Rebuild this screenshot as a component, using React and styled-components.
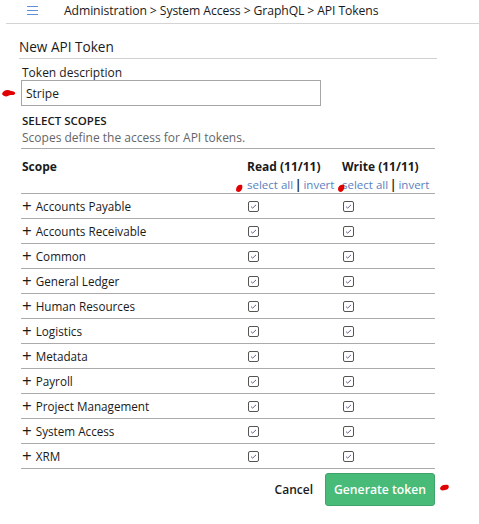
import React from 'react'
import styled, { createGlobalStyle } from 'styled-components'

const GlobalStyle = createGlobalStyle`
  html, body {
    margin: 0;
    padding: 0;
    background: #ffffff;
  }
  body {
    font-family: "Open Sans", "Noto Sans", sans-serif;
    color: #1a1a1a;
  }
`;

const Page = styled.div`
  position: relative;
  width: 479px;
  height: 524px;
  overflow: hidden;
`;

const TopBar = styled.div`
  display: flex;
  align-items: center;
  height: 23px;
  margin-left: 6px;
  border-bottom: 1px solid #d4d4d4;
`;

const Burger = styled.div`
  display: flex;
  flex-direction: column;
  gap: 3px;
  width: 11px;
  margin-left: 21px;
  margin-right: 26px;
  margin-top: -3px;

  span {
    display: block;
    height: 1px;
    background: #5f8fd6;
  }
`;

const Crumbs = styled.div`
  font-size: 12.2px;
  color: #1a1a1a;
  margin-top: -3px;
  letter-spacing: -0.1px;
`;

const Content = styled.div`
  width: 418px;
  margin-left: 19px;
  padding-top: 13px;
`;

const Title = styled.h2`
  margin: 0;
  font-size: 13.6px;
  font-weight: 400;
  line-height: 20px;
  padding-bottom: 1px;
  border-bottom: 1px solid #d0d0d0;
  color: #1a1a1a;
`;

const Form = styled.div`
  padding-left: 2px;
  width: 414px;
`;

const Label = styled.div`
  font-size: 12px;
  line-height: 16px;
  margin-top: 6px;
  padding-left: 1px;
`;

const Input = styled.input`
  display: block;
  box-sizing: border-box;
  width: 300px;
  height: 26px;
  margin-top: -1px;
  border: 1px solid #a6a6a6;
  padding: 0 4px;
  font-family: inherit;
  font-size: 12px;
  color: #1a1a1a;
  outline: none;
`;

const SectionHead = styled.div`
  font-size: 11.5px;
  font-weight: 600;
  margin-top: 7px;
  line-height: 16px;
  padding-left: 1px;
`;

const SectionSub = styled.div`
  font-size: 12px;
  color: #666666;
  line-height: 17px;
  padding-left: 1px;
  padding-bottom: 2px;
  border-bottom: 1px solid #aaaaaa;
`;

const Table = styled.div`
  display: grid;
  grid-template-columns: 226px 95px 93px;
`;

const HeadCell = styled.div`
  display: flex;
  flex-direction: column;
  justify-content: flex-start;
  height: 44px;
  padding-left: ${({ $first }) => ($first ? '1px' : '0')};
  border-bottom: 1px solid #aaaaaa;
`;

const HeadTitle = styled.div`
  font-size: 12px;
  font-weight: 700;
  line-height: 16px;
  margin-top: 10px;
`;

const Links = styled.div`
  font-size: 11.5px;
  line-height: 16px;
  margin-top: 2px;
  color: #5a7fc0;
  white-space: nowrap;

  b {
    color: #1a1a1a;
    font-weight: 700;
    margin: 0 2px;
  }
`;

const Cell = styled.div`
  display: flex;
  align-items: center;
  height: 24px;
  border-bottom: 1px solid #aaaaaa;
  font-size: 11.7px;
  padding-left: 1px;
`;

const Plus = styled.span`
  font-size: 17px;
  font-weight: 400;
  line-height: 1;
  margin-right: 4px;
  margin-top: -2px;
`;

const Box = styled.svg`
  width: 11px;
  height: 11px;
  display: block;
`;

const Actions = styled.div`
  display: flex;
  justify-content: flex-end;
  align-items: center;
  gap: 12px;
  margin-top: 4px;
`;

const Cancel = styled.button`
  background: none;
  border: none;
  padding: 0;
  font-family: inherit;
  font-size: 12px;
  font-weight: 600;
  color: #1a1a1a;
  cursor: pointer;
`;

const Primary = styled.button`
  box-sizing: border-box;
  width: 110px;
  height: 33px;
  background: #48bb78;
  border: 1px solid #3fa46a;
  border-radius: 3px;
  color: #ffffff;
  font-family: inherit;
  font-size: 12.2px;
  font-weight: 600;
  cursor: pointer;
`;

const Mark = styled.svg`
  position: absolute;
  left: ${({ $x }) => $x}px;
  top: ${({ $y }) => $y}px;
`;

const scopes = [
  'Accounts Payable',
  'Accounts Receivable',
  'Common',
  'General Ledger',
  'Human Resources',
  'Logistics',
  'Metadata',
  'Payroll',
  'Project Management',
  'System Access',
  'XRM',
];

const CheckBox = () => (
  <Box viewBox="0 0 11 11">
    <rect x="0.5" y="0.5" width="10" height="10" rx="1.5" fill="#fff" stroke="#555" />
    <path d="M3 5.6 L4.7 7.1 L8 3.9" fill="none" stroke="#5a4a7a" strokeWidth="0.9" />
  </Box>
);

const App = () => {
  return (
    <Page>
      <GlobalStyle />
      <TopBar>
        <Burger>
          <span />
          <span />
          <span />
        </Burger>
        <Crumbs>Administration &gt; System Access &gt; GraphQL &gt; API Tokens</Crumbs>
      </TopBar>
      <Content>
        <Title>New API Token</Title>
        <Form>
          <Label>Token description</Label>
          <Input defaultValue="Stripe" />
          <SectionHead>SELECT SCOPES</SectionHead>
          <SectionSub>Scopes define the access for API tokens.</SectionSub>
          <Table>
            <HeadCell $first>
              <HeadTitle>Scope</HeadTitle>
            </HeadCell>
            <HeadCell>
              <HeadTitle>Read (11/11)</HeadTitle>
              <Links>select all<b>|</b>invert</Links>
            </HeadCell>
            <HeadCell>
              <HeadTitle>Write (11/11)</HeadTitle>
              <Links>select all<b>|</b>invert</Links>
            </HeadCell>
            {scopes.map((s) => (
              <React.Fragment key={s}>
                <Cell>
                  <Plus>+</Plus>
                  {s}
                </Cell>
                <Cell>
                  <CheckBox />
                </Cell>
                <Cell>
                  <CheckBox />
                </Cell>
              </React.Fragment>
            ))}
          </Table>
          <Actions>
            <Cancel>Cancel</Cancel>
            <Primary>Generate token</Primary>
          </Actions>
        </Form>
      </Content>
      <Mark $x={1} $y={88} width="16" height="10" viewBox="0 0 16 10">
        <path d="M1 6 C2 2 7 1 10 3 C12 3 15 4 14 6 C12 8 9 6 7 8 C5 9 2 8 1 6Z" fill="#e00000" />
      </Mark>
      <Mark $x={235} $y={183} width="9" height="10" viewBox="0 0 9 10">
        <path d="M1 7 C1 3 4 1 7 2 C8 4 7 8 4 9 C2 9 1 8 1 7Z" fill="#e00000" />
      </Mark>
      <Mark $x={337} $y={183} width="9" height="10" viewBox="0 0 9 10">
        <path d="M1 6 C1 3 4 1 7 2 C8 4 7 8 4 9 C2 9 1 8 1 6Z" fill="#e00000" />
      </Mark>
      <Mark $x={439} $y={483} width="11" height="9" viewBox="0 0 11 9">
        <path d="M1 5 C2 2 6 1 9 2 C11 4 9 7 6 7 C3 8 1 7 1 5Z" fill="#e00000" />
      </Mark>
    </Page>
  )
}

export default App
